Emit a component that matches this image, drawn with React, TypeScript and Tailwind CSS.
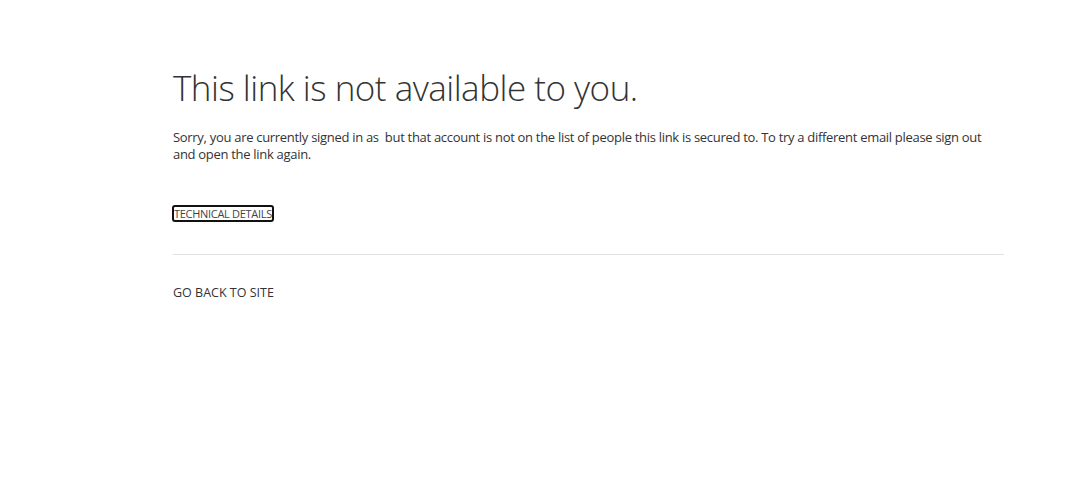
export default function App() {
  return (
    <div className="min-h-[486px] w-full bg-white" style={{ fontFamily: '"Open Sans", "Noto Sans", sans-serif' }}>
      <div className="ml-[173px] w-[831px] pt-[64px]">
        <h1 className="text-[35px] font-light leading-[48px] text-[#333333] tracking-[-0.5px]">
          This link is not available to you.
        </h1>
        <p className="mt-[17px] text-[13px] leading-[17px] tracking-[-0.3px] text-[#333333]">
          Sorry, you are currently signed in as&nbsp; but that account is not on the list of people this link is secured to. To try a different email please sign out and open the link again.
        </p>
        <div className="mt-[37px]">
          <button className="-ml-px rounded-[3px] border-2 border-[#111111] px-0 text-[11px] leading-[13px] tracking-[-0.3px] text-[#444444]">
            TECHNICAL DETAILS
          </button>
        </div>
        <div className="mt-[30px] h-px w-full bg-[#e1e1e1]" />
        <a href="#" className="mt-[30px] block text-[12.5px] leading-[16px] text-[#333333]">
          GO BACK TO SITE
        </a>
      </div>
    </div>
  );
}
